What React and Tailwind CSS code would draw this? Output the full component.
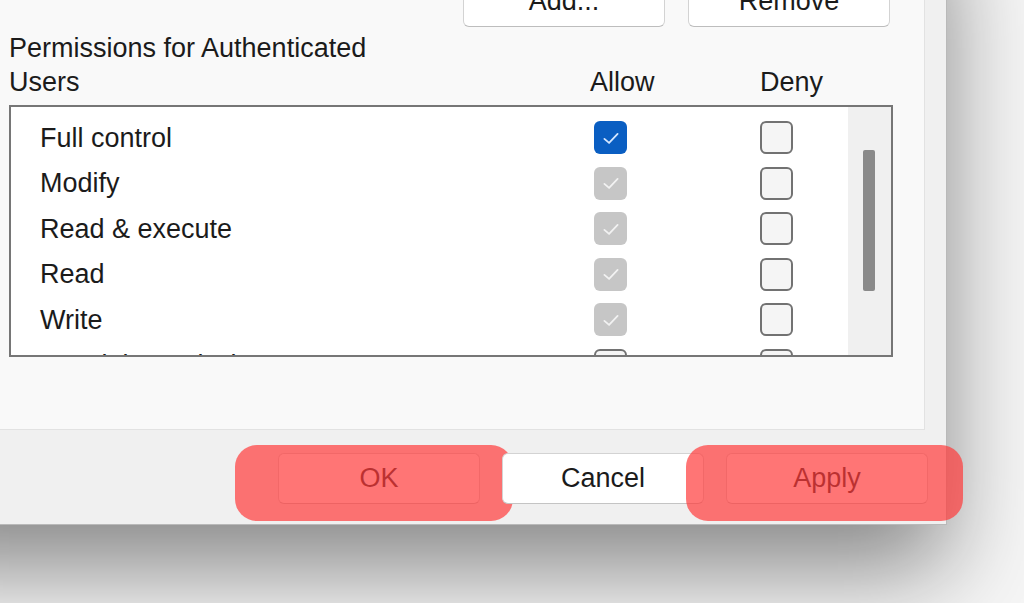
import React from "react"

const permissions = [
  { name: "Full control", allow: "checked" },
  { name: "Modify", allow: "inherited" },
  { name: "Read & execute", allow: "inherited" },
  { name: "Read", allow: "inherited" },
  { name: "Write", allow: "inherited" },
  { name: "Special permissions", allow: "empty" },
]

function Check({ color }) {
  return (
    <svg viewBox="0 0 16 16" className="h-[22px] w-[22px]" fill="none">
      <path d="M3.2 8.6 L6.6 11.6 L12.8 5" stroke={color} strokeWidth="1.3" strokeLinecap="round" strokeLinejoin="round" />
    </svg>
  )
}

function Box({ state }) {
  if (state === "checked") {
    return (
      <div className="flex h-[33px] w-[33px] items-center justify-center rounded-[6px] bg-[#0a5ec2]">
        <Check color="#d6e7ff" />
      </div>
    )
  }
  if (state === "inherited") {
    return (
      <div className="flex h-[33px] w-[33px] items-center justify-center rounded-[6px] bg-[#c6c6c6]">
        <Check color="#f2f2f2" />
      </div>
    )
  }
  return <div className="h-[33px] w-[33px] rounded-[6px] border-2 border-[#727272] bg-[#f5f5f5]" />
}

function DialogButton({ label, highlight, hlLeft, hlRight }) {
  return (
    <div className="relative h-[51px] w-[202px]">
      <button className="flex h-full w-full items-center justify-center rounded-[6px] border border-[#d3d3d3] border-b-[#c4c4c4] bg-white text-[27px] text-[#1b1b1b]">
        {label}
      </button>
      {highlight && (
        <div className={`absolute -top-[8px] -bottom-[17px] rounded-[22px] bg-[#ff3a3a]/70 ${hlLeft} ${hlRight}`} />
      )}
    </div>
  )
}

export default function App() {
  return (
    <div className="h-[603px] w-[1024px] overflow-hidden bg-[#f6f6f6]" style={{ fontFamily: '"Liberation Sans", Arial, sans-serif' }}>
      {/* dialog window, runs off the top-left edge */}
      <div className="-ml-[100px] -mt-[100px] flex w-[1047px] flex-col border-r border-b border-[#b9b9b9] bg-[#f0f0f0] pl-[100px] pt-[100px] shadow-[0_45px_90px_rgba(0,0,0,0.45)]">
        <div className="flex h-[430px] w-[925px] flex-col border-r border-b border-[#e2e2e2] bg-[#f9f9f9] pl-[9px] text-[#1b1b1b]">
          <div className="-mt-[24px] mr-[34px] flex justify-end gap-[23px]">
            <button className="flex h-[51px] w-[202px] items-center justify-center rounded-[6px] border border-[#d3d3d3] border-b-[#bdbdbd] bg-white text-[27px]">
              Add...
            </button>
            <button className="flex h-[51px] w-[202px] items-center justify-center rounded-[6px] border border-[#d3d3d3] border-b-[#bdbdbd] bg-white text-[27px]">
              Remove
            </button>
          </div>

          <div className="mt-[4px] flex items-end text-[27px] leading-[34px]">
            <div className="w-[581px]">
              Permissions for Authenticated
              <br />
              Users
            </div>
            <div className="w-[170px]">Allow</div>
            <div>Deny</div>
          </div>

          <div className="mt-[6px] flex h-[252px] w-[884px] overflow-hidden border-2 border-[#767676] bg-white">
            <div className="flex-1 overflow-hidden pt-[8px] pl-[29px]">
              {permissions.map((p) => (
                <div key={p.name} className="flex h-[45.5px] items-center text-[27px]">
                  <div className="w-[554px] whitespace-nowrap">{p.name}</div>
                  <Box state={p.allow} />
                  <div className="ml-[133px]">
                    <Box state="empty" />
                  </div>
                </div>
              ))}
            </div>
            <div className="w-[43px] bg-[#f0f0f0] pt-[43px] pl-[15px]">
              <div className="h-[141px] w-[12px] rounded-[2px] bg-[#8a8a8a]" />
            </div>
          </div>
        </div>

        <div className="flex h-[94px] justify-end gap-[22px] pt-[23px] pr-[18px]">
          <DialogButton label="OK" highlight hlLeft="-left-[43px]" hlRight="-right-[33px]" />
          <DialogButton label="Cancel" />
          <DialogButton label="Apply" highlight hlLeft="-left-[40px]" hlRight="-right-[35px]" />
        </div>
      </div>
    </div>
  )
}
